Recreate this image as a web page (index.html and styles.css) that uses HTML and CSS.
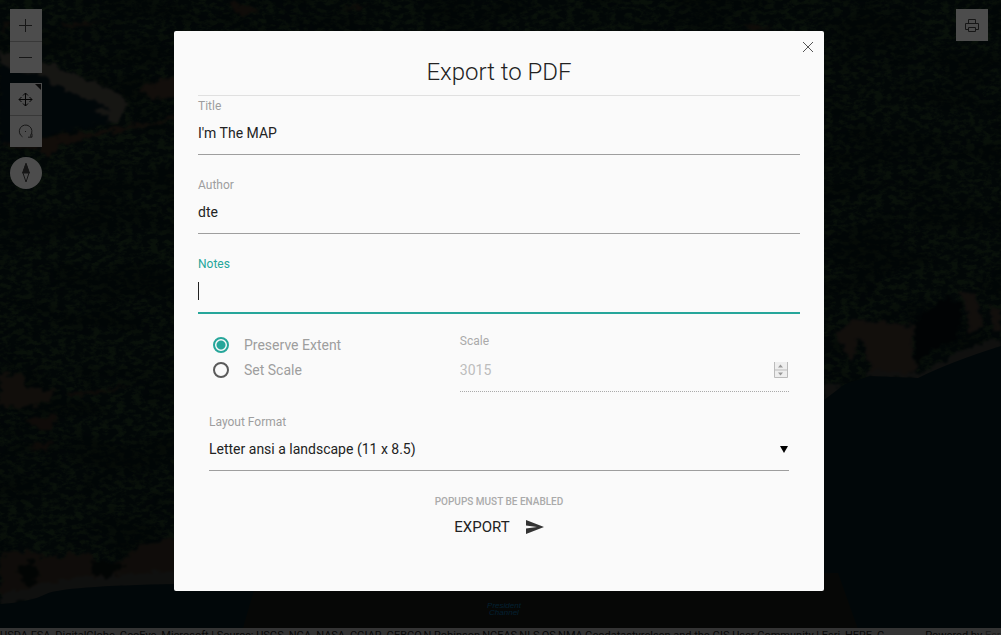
FILE: index.html
```html
<!DOCTYPE html>
<html lang="en">
<head>
    <meta charset="UTF-8">
    <meta name="viewport" content="width=device-width, initial-scale=1.0">
    <title>Export to PDF</title>
    <link rel="stylesheet" href="styles.css">
</head>
<body>
    <div class="view">
        <svg class="map" viewBox="0 0 1001 635" preserveAspectRatio="xMidYMid slice" color-interpolation-filters="sRGB" aria-hidden="true">
            <defs>
                <filter id="trees" x="0" y="0" width="100%" height="100%">
                    <feTurbulence type="fractalNoise" baseFrequency="0.12 0.2" numOctaves="4" seed="4"/>
                    <feColorMatrix values="0 0 0 0 0.14  0 0 0 0 0.24  0 0 0 0 0.14  4 0 0 0 -1.7"/>
                </filter>
                <filter id="shade" x="0" y="0" width="100%" height="100%">
                    <feTurbulence type="fractalNoise" baseFrequency="0.012 0.03" numOctaves="4" seed="9"/>
                    <feColorMatrix values="0 0 0 0 0.01  0 0 0 0 0.05  0 0 0 0 0.06  4 0 0 0 -1.7"/>
                </filter>
                <filter id="rough" x="-10%" y="-10%" width="120%" height="120%">
                    <feTurbulence type="fractalNoise" baseFrequency="0.12 0.16" numOctaves="3" seed="2" result="n"/>
                    <feDisplacementMap in="SourceGraphic" in2="n" scale="12" xChannelSelector="R" yChannelSelector="G"/>
                    <feGaussianBlur stdDeviation="1"/>
                </filter>
            </defs>
            <rect width="1001" height="635" fill="#08191a"/>
            <rect width="1001" height="635" filter="url(#trees)" opacity=".9"/>
            <rect width="1001" height="635" filter="url(#shade)" opacity=".4"/>

            <!-- cove, top left -->
            <g filter="url(#rough)">
                <path d="M0 50 L34 60 L70 72 L112 90 L128 102 L118 122 L70 128 L0 146Z" fill="#4c4a42"/>
                <path d="M0 64 L40 75 L74 94 L110 108 L92 110 L118 122 L70 130 L0 146Z" fill="#06181f"/>
                <path d="M140 88 L178 76 L178 98 L150 99Z" fill="#3d3026"/>
                <path d="M0 144 L90 132 L150 122 L178 116 L176 120 L94 136 L60 146 L50 158 L40 150Z" fill="#3b2c20"/>
                <path d="M0 26 L12 24 L0 32Z M62 24 L110 22 L64 28Z M225 0 L262 12 L240 14Z M345 8 L366 3 L364 10Z M745 24 L772 28 L748 30Z" fill="#33281e"/>
            </g>

            <!-- clearings and south shore -->
            <g filter="url(#rough)">
                <path d="M0 374 L22 374 L26 386 L56 392 L50 402 L16 408 L0 404Z" fill="#3a3127"/>
                <path d="M70 392 L132 386 L70 398Z M28 418 L58 416 L50 430 L32 426Z M24 448 L54 440 L40 450Z" fill="#33271e"/>
                <path d="M0 556 L30 550 L46 558 L90 552 L100 566 L126 560 L140 546 L176 538 L176 576 L100 586 L0 594Z" fill="#332b22"/>
                <path d="M0 594 L60 580 L176 570 L176 586 L90 590 L40 598 L0 606Z" fill="#353735"/>
                <path d="M18 566 L34 560 L40 576 L30 586 L20 578Z M90 560 L124 566 L110 578 L92 574Z" fill="#08110f"/>
            </g>
            <path d="M0 604 Q30 602 46 594 T176 584 V635 H0Z" fill="#06191f"/>

            <!-- east cliffs -->
            <g filter="url(#rough)">
                <path d="M834 334 L850 322 L872 320 L914 326 L912 352 L918 372 L870 376 L866 350 L858 340 L852 362Z M958 290 L975 294 L984 326 L970 334 L966 310Z M988 304 L1001 310 V332 L994 330Z" fill="#3c322b"/>
                <path d="M824 386 L840 386 L842 398 L824 400Z M866 370 L920 374 L968 348 L1001 338 V348 L918 380 L866 378Z" fill="#363835"/>
                <path d="M914 320 L946 296 L962 304 L956 340 L930 350 L916 366Z" fill="#040c0f"/>
            </g>
            <path d="M824 400 L845 384 L870 376 L918 378 Q950 362 1001 346 V635 H170 V590Z" fill="#06191f"/>

            <path d="M259 573 H838 L860 635 H241Z" fill="#161a15"/>
            <text class="map-name" x="504" y="608">President</text>
            <text class="map-name" x="504" y="615">Channel</text>
        </svg>

        <div class="tools tools-left">
            <div class="tool-group">
                <button class="tool" type="button" aria-label="Zoom in">
                    <svg width="16" height="16" viewBox="1 0 16 16"><path d="M2 8.500h13M8.500 2v13"/></svg>
                </button>
                <button class="tool" type="button" aria-label="Zoom out">
                    <svg width="16" height="16" viewBox="1 0 16 16"><path d="M2 7.500h13"/></svg>
                </button>
            </div>
            <div class="tool-group">
                <button class="tool tool-active" type="button" aria-label="Pan">
                    <svg width="16" height="16" viewBox="1 0 16 16"><path d="M2 8.500h13M8.500 2v13M6 4.500l2.500-2.500 2.500 2.500M6 12.500l2.500 2.500 2.500-2.500M4.500 6L2 8.500l2.500 2.500M12.500 6l2.500 2.500-2.500 2.500"/></svg>
                </button>
                <button class="tool" type="button" aria-label="Rotate">
                    <svg width="16" height="16" viewBox="1 1 16 16"><path d="M5.500 13.800A6.300 6.300 0 1 1 13.500 12.300L14 14M11 14.200h4v-3.500"/><path d="M8 8.500h1"/></svg>
                </button>
            </div>
            <button class="tool compass" type="button" aria-label="Compass">
                <svg width="10" height="20" viewBox="0 0 10 20"><path d="M5 .5L8 10 5 19 2 10Z"/><path class="needle" d="M5 .5L8.500 10h-7Z"/></svg>
            </button>
        </div>

        <div class="tools tools-right">
            <button class="tool" type="button" aria-label="Print">
                <svg width="16" height="16" viewBox="0 0 16 16"><path d="M4.500 6.500v-4h7v4M4.500 12.500h-3v-6h13v6h-3M4.500 10.500h7v4h-7z"/></svg>
            </button>
        </div>

        <div class="attribution">
            <span>USDA FSA, DigitalGlobe, GeoEye, Microsoft | Source: USGS, NGA, NASA, CGIAR, GEBCO,N Robinson,NCEAS,NLS,OS,NMA,Geodatastyrelsen and the GIS User Community | Esri, HERE, G...</span>
            <span>Powered by <a href="#">Esri</a></span>
        </div>
    </div>

    <div class="overlay">
        <form class="modal" role="dialog" aria-labelledby="modalTitle">
            <button class="close" type="button" aria-label="Close">
                <svg width="12" height="12" viewBox="0 0 12 12"><path d="M1 1l10 10M11 1L1 11"/></svg>
            </button>
            <h4 id="modalTitle">Export to PDF</h4>

            <div class="field">
                <label for="title">Title</label>
                <input type="text" id="title" value="I'm The MAP">
            </div>
            <div class="field">
                <label for="author">Author</label>
                <input type="text" id="author" value="dte">
            </div>
            <div class="field active">
                <label for="notes">Notes</label>
                <input type="text" id="notes">
            </div>

            <div class="row">
                <div class="col radios">
                    <label><input type="radio" name="extent" checked> Preserve Extent</label>
                    <label><input type="radio" name="extent"> Set Scale</label>
                </div>
                <div class="col field disabled">
                    <label for="scale">Scale</label>
                    <div class="number">
                        <input type="number" id="scale" value="3015" disabled>
                        <svg class="spinner" width="14" height="16" viewBox="0 0 14 16" aria-hidden="true">
                            <path d="M.5 0v15.500h13V0M.5 8h13"/>
                            <path class="arrow" d="M4 5.500h5L6.500 2.500ZM4 10.500h5L6.500 13.500Z"/>
                        </svg>
                    </div>
                </div>
            </div>

            <div class="col field select">
                <label for="layout">Layout Format</label>
                <select id="layout">
                    <option>Letter ansi a landscape (11 x 8.5)</option>
                </select>
            </div>

            <div class="footer">
                <small>Popups must be enabled</small>
                <button class="export" type="submit">
                    Export
                    <svg width="18" height="14" viewBox="0 0 18 14"><path d="M0 0L18 7 0 14V8.500L11 7 0 5.500Z"/></svg>
                </button>
            </div>
        </form>
    </div>
</body>
</html>
```
FILE: styles.css
```css
* {
    box-sizing: border-box;
}
body {
    margin: 0;
    font-family: Roboto, "Liberation Sans", sans-serif;
    font-size: 14px;
    color: #222;
}
input, select, button {
    font: inherit;
    color: inherit;
    margin: 0;
    padding: 0;
    border: none;
    border-radius: 0;
    background: none;
    outline: none;
}
button {
    cursor: pointer;
}

/* map view */
.view {
    position: relative;
    height: 100vh;
    overflow: hidden;
    background-color: #06191f;
}
.map {
    display: block;
    width: 100%;
    height: 100%;
}
.map-name {
    font-family: "Liberation Sans", sans-serif;
    font-size: 8px;
    font-style: italic;
    text-anchor: middle;
    fill: #0b6aa0;
}
.tools {
    position: absolute;
    top: 9px;
    display: flex;
    flex-direction: column;
    gap: 10px;
}
.tools-left {
    left: 10px;
}
.tools-right {
    right: 13px;
}
.tool-group {
    display: flex;
    flex-direction: column;
}
.tool {
    position: relative;
    display: flex;
    align-items: center;
    justify-content: center;
    width: 32px;
    height: 32px;
    background-color: #fff;
}
.tool + .tool {
    border-top: 1px solid #bbb;
}
.tool svg {
    fill: none;
    stroke: #4c4c4c;
}
.tool-active svg {
    stroke: #111;
}
.tool-active::after {
    content: "";
    position: absolute;
    top: 1px;
    right: 1px;
    border-top: 6px solid #222;
    border-left: 6px solid transparent;
}
.compass {
    border-radius: 50%;
}
.compass .needle {
    fill: #4c4c4c;
}
.attribution {
    position: absolute;
    left: 0;
    right: 0;
    bottom: -9px;
    display: flex;
    gap: 32px;
    height: 16px;
    line-height: 16px;
    font-size: 11px;
    white-space: nowrap;
    color: #222;
    background-color: #aaa;
}
.attribution a {
    color: #666;
    text-decoration: none;
}

/* modal */
.overlay {
    position: fixed;
    top: 0;
    left: 0;
    right: 0;
    bottom: 0;
    display: flex;
    align-items: flex-start;
    justify-content: center;
    padding: 31px 3px 0 0;
    background-color: rgba(0, 0, 0, 0.7);
}
.modal {
    position: relative;
    width: 90%;
    max-width: 650px;
    padding: 24px;
    border-radius: 2px;
    background-color: #fafafa;
}
.modal h4 {
    margin: 0 0 3px;
    padding-bottom: 6px;
    border-bottom: 1px solid #e0e0e0;
    font-size: 24px;
    font-weight: 300;
    line-height: 34px;
    text-align: center;
}
.close {
    position: absolute;
    top: 10px;
    right: 10px;
    display: flex;
}
.close svg {
    fill: none;
    stroke: #555;
}
.field {
    margin-bottom: 23px;
}
.field label {
    display: block;
    font-size: 12px;
    line-height: 14px;
    color: #9e9e9e;
}
.field input, .field select {
    display: block;
    width: 100%;
    height: 42px;
    padding-bottom: 2px;
    border-bottom: 1px solid #9e9e9e;
}
.active {
    margin-bottom: 18px;
}
.active label {
    color: #26a69a;
}
.active input { /* focused field with its text cursor */
    height: 43px;
    border-bottom: 2px solid #26a69a;
    caret-color: transparent;
    background: linear-gradient(#222, #222) 0 11px / 1px 18px no-repeat;
}
.row {
    display: grid;
    grid-template-columns: 5fr 7fr;
}
.row .field {
    padding-top: 2px;
}
.col {
    padding: 0 11px;
}
.radios label {
    display: flex;
    align-items: center;
    gap: 15px;
    height: 25px;
    padding-left: 4px;
    color: #9e9e9e;
}
.radios input {
    appearance: none;
    width: 16px;
    height: 16px;
    border: 2px solid #5a5a5a;
    border-radius: 50%;
}
.radios input:checked {
    border-color: #26a69a;
    background: radial-gradient(circle, #26a69a 4px, transparent 5px);
}
.number {
    display: flex;
    align-items: center;
    height: 44px;
    border-bottom: 1px dotted #aaa;
}
.number input {
    flex: 1;
    height: 43px;
    padding: 0;
    border: none;
    color: #bdbdbd;
    appearance: textfield;
}
.disabled label {
    color: #aaa;
}
.spinner {
    margin-right: 1px;
    fill: #eee;
    stroke: #bbb;
}
.spinner .arrow {
    fill: #999;
    stroke: none;
}
.field select {
    appearance: none;
}
.select {
    position: relative;
}
.select::after {
    content: "";
    position: absolute;
    right: 12px;
    bottom: 18px;
    border-top: 7px solid #000;
    border-left: 4px solid transparent;
    border-right: 4px solid transparent;
    pointer-events: none;
}
.footer {
    display: flex;
    flex-direction: column;
    align-items: center;
    padding-bottom: 22px;
}
.footer small {
    font-size: 10px;
    font-weight: 500;
    line-height: 15px;
    text-transform: uppercase;
    color: #aaa;
}
.export {
    display: flex;
    align-items: center;
    gap: 16px;
    height: 36px;
    font-size: 15px;
    text-transform: uppercase;
}
.export svg {
    fill: #333;
}
```
